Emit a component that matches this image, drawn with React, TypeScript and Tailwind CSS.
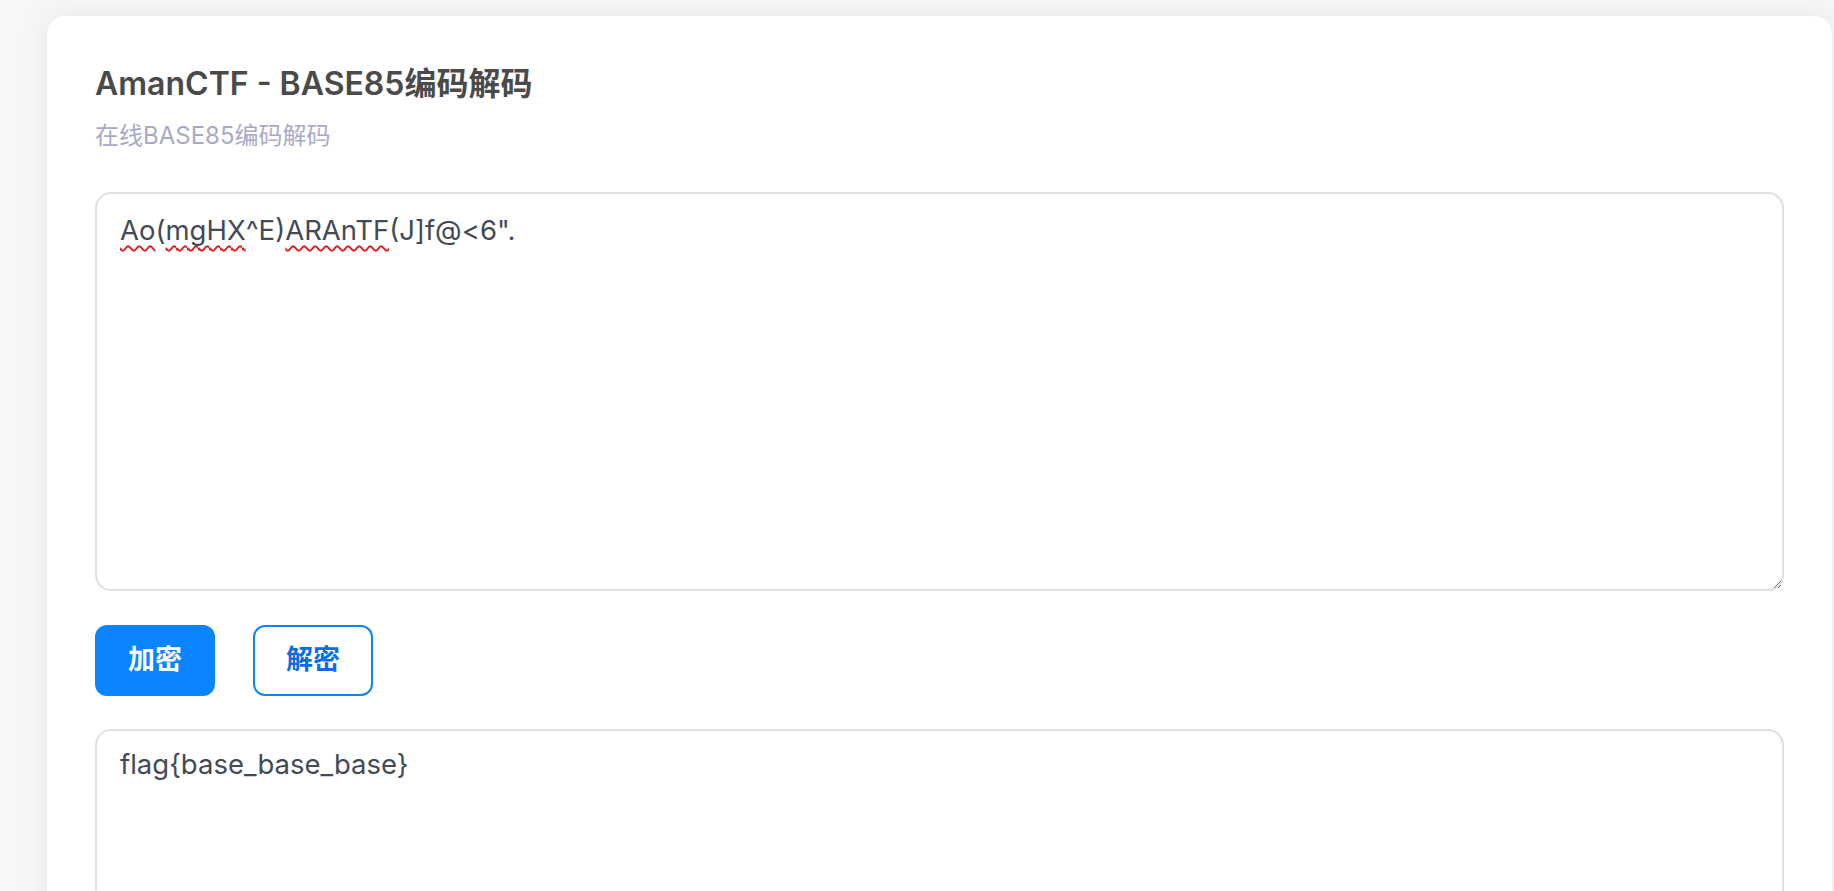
import { useState } from 'react'

const font = { fontFamily: 'Inter, "Noto Sans CJK SC", sans-serif' }

const typo = 'underline decoration-wavy decoration-[#e8171f] decoration-[1.5px] underline-offset-[5px] [text-decoration-skip-ink:none]'

export default function App() {
  const [output] = useState('flag{base_base_base}')

  return (
    <div className="min-h-screen bg-[#f6f7f9] pt-4 pl-[47px]" style={font}>
      <div className="w-[1785px] rounded-[18px] bg-white px-12 pt-12 pb-12 shadow-[0_0_32px_rgba(0,0,0,0.07)]">
        <h1 className="text-[32px] font-semibold leading-10 text-[#4a4a4a]">AmanCTF - BASE85编码解码</h1>
        <p className="mt-4 text-[24px] leading-8 text-[#a9aac6]">在线BASE85编码解码</p>

        <div className="mt-10 h-[399px] resize overflow-auto rounded-2xl border-2 border-[#e0e0e0] px-[23px] py-[17px] text-[27.5px] leading-[39px] text-[#434a56]">
          <span className={typo}>Ao</span>(<span className={typo}>mgHX</span>^E)<span className={typo}>ARAnTF</span>(J]f@&lt;6".
        </div>

        <div className="mt-[34px] flex gap-[38px]">
          <button className="h-[71px] w-[120px] rounded-xl bg-[#0a84ff] text-[27px] font-bold text-white">加密</button>
          <button className="h-[71px] w-[120px] rounded-xl border-2 border-[#0a84ff] bg-white text-[27px] font-bold text-[#0a6ee0]">解密</button>
        </div>

        <textarea
          readOnly
          value={output}
          className="mt-[33px] block h-[399px] w-full rounded-2xl border-2 border-[#e0e0e0] px-[23px] py-[14px] text-[27.5px] leading-[39px] text-[#434a56] outline-none"
        />
      </div>
    </div>
  )
}
